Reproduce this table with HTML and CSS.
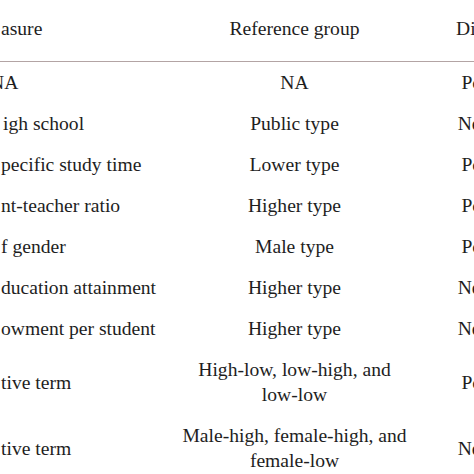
FILE: index.html
```html
<!DOCTYPE html>
<html>
<head>
<meta charset="utf-8">
<link rel="stylesheet" href="styles.css">
</head>
<body>
<div class="frame">
<table class="data">
  <colgroup>
    <col class="c-measure">
    <col class="c-ref">
    <col class="c-dir">
  </colgroup>
  <thead>
    <tr>
      <th class="left">asure</th>
      <th>Reference group</th>
      <th>Direction</th>
    </tr>
  </thead>
  <tbody>
    <tr><td class="left clip">NA</td><td>NA</td><td>Positive</td></tr>
    <tr><td class="left nudge">igh school</td><td>Public type</td><td>Negative</td></tr>
    <tr><td class="left">pecific study time</td><td>Lower type</td><td>Positive</td></tr>
    <tr><td class="left">nt-teacher ratio</td><td>Higher type</td><td>Positive</td></tr>
    <tr><td class="left">f gender</td><td>Male type</td><td>Positive</td></tr>
    <tr><td class="left">ducation attainment</td><td>Higher type</td><td>Negative</td></tr>
    <tr><td class="left">owment per student</td><td>Higher type</td><td>Negative</td></tr>
    <tr><td class="left">tive term</td><td>High-low, low-high, and <span class="nw">low-low</span></td><td>Positive</td></tr>
    <tr><td class="left">tive term</td><td>Male-high, female-high, and <span class="nw">female-low</span></td><td>Negative</td></tr>
  </tbody>
</table>
</div>
</body>
</html>
```
FILE: styles.css
```css
html, body {
  margin: 0;
  padding: 0;
  background: #ffffff;
  overflow: hidden;
}
body {
  padding-top: 8px;
}
.frame {
  width: 474px;
  overflow: hidden;
}
.data {
  width: 577px;
  table-layout: fixed;
  border-collapse: collapse;
  font-family: "Liberation Serif", "Times New Roman", serif;
  font-size: 19.6px;
  line-height: 25px;
  color: #1e1e1e;
}
.c-measure { width: 180px; }
.c-ref { width: 229px; }
.c-dir { width: 168px; }
.data th {
  font-weight: normal;
  text-align: center;
  padding: 8px 0 20px 0;
  border-bottom: 1px solid #b3a4a4;
  white-space: nowrap;
}
.data td {
  text-align: center;
  vertical-align: middle;
  padding: 8px 0;
}
.data .left {
  text-align: left;
  padding-left: 1px;
  white-space: nowrap;
}
.data .clip {
  text-indent: -11px;
}
.data .nudge {
  padding-left: 3px;
}
.nw {
  white-space: nowrap;
}
```
